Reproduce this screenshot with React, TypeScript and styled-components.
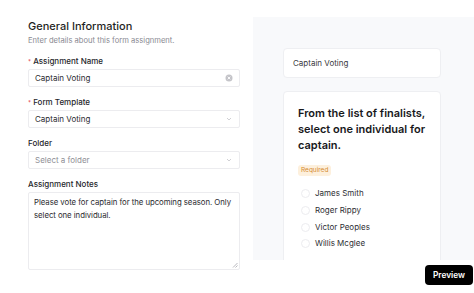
import styled, { createGlobalStyle } from 'styled-components';

const GlobalStyle = createGlobalStyle`
  * { box-sizing: border-box; }
  body {
    margin: 0;
    background: #ffffff;
    font-family: Inter, "Noto Sans", sans-serif;
    color: #1f1f24;
  }
`;

const Page = styled.div`
  display: flex;
  width: 474px;
  height: 293px;
  overflow: hidden;
`;

const FormColumn = styled.div`
  width: 240px;
  padding: 19px 0 0 28px;
  display: flex;
  flex-direction: column;
`;

const Heading = styled.h1`
  margin: 0;
  font-size: 11px;
  line-height: 15px;
  font-weight: 500;
  color: #1f1f24;
`;

const Subheading = styled.p`
  margin: 1px 0 0;
  font-size: 7.6px;
  line-height: 11px;
  color: #8a8a92;
`;

const Field = styled.div`
  margin-top: 10px;
  display: flex;
  flex-direction: column;
`;

const Label = styled.label`
  font-size: 8px;
  line-height: 11px;
  font-weight: 500;
  color: #26262b;
  margin-bottom: 2px;
`;

const Star = styled.span`
  color: #e5484d;
  font-size: 6px;
  vertical-align: top;
  margin-right: 2px;
`;

const Input = styled.div<{ $placeholder?: boolean }>`
  height: 18px;
  border: 1px solid #ececef;
  border-radius: 2px;
  display: flex;
  align-items: center;
  justify-content: space-between;
  padding: 0 6px;
  font-size: 8px;
  color: ${({ $placeholder }) => ($placeholder ? '#8f8f96' : '#2b2b30')};
`;

const TextArea = styled.div`
  position: relative;
  height: 78px;
  border: 1px solid #ececef;
  border-radius: 2px;
  padding: 3px 5px;
  font-size: 7.8px;
  line-height: 13px;
  letter-spacing: -0.05px;
  color: #2b2b30;
`;

const Grip = styled.svg`
  position: absolute;
  right: 1px;
  bottom: 1px;
`;

const PreviewColumn = styled.div`
  flex: 1;
  margin-left: 13px;
  display: flex;
  flex-direction: column;
  padding-top: 17px;
`;

const PreviewPanel = styled.div`
  height: 243px;
  background: #f8f9fb;
  padding: 31px 0 0 30px;
  overflow: hidden;
  display: flex;
  flex-direction: column;
  gap: 13px;
`;

const Card = styled.div`
  flex-shrink: 0;
  width: 158px;
  background: #ffffff;
  border: 1px solid #eeeff2;
  border-radius: 4px;
`;

const TitleCard = styled(Card)`
  height: 30px;
  display: flex;
  align-items: center;
  padding-left: 9px;
  font-size: 8px;
  color: #3a3a40;
`;

const QuestionCard = styled(Card)`
  padding: 13px 14px 20px;
  min-height: 190px;
`;

const Question = styled.h2`
  margin: 0;
  font-size: 11px;
  line-height: 16px;
  font-weight: 600;
  color: #18181b;
`;

const Badge = styled.span`
  display: inline-block;
  margin-top: 12px;
  padding: 1px 3px;
  border-radius: 3px;
  background: #fdf0dd;
  color: #d58a2e;
  font-size: 6.5px;
  line-height: 9px;
`;

const Options = styled.div`
  margin-top: 12px;
  display: flex;
  flex-direction: column;
  gap: 5.8px;
  padding-left: 3px;
`;

const Option = styled.div`
  display: flex;
  align-items: center;
  gap: 5px;
  font-size: 8px;
  line-height: 11px;
  color: #2e2e33;
`;

const Radio = styled.span`
  width: 9px;
  height: 9px;
  border-radius: 50%;
  border: 1px solid #ececef;
`;

const Footer = styled.div`
  display: flex;
  justify-content: flex-end;
  padding: 5px 1px 0 0;
`;

const PreviewButton = styled.button`
  height: 20px;
  padding: 0 8px;
  border: none;
  border-radius: 4px;
  background: #000000;
  color: #ffffff;
  font-family: Inter, "Noto Sans", sans-serif;
  font-size: 8.3px;
  font-weight: 600;
`;

const ClearIcon = () => (
  <svg width="8" height="8" viewBox="0 0 8 8">
    <circle cx="4" cy="4" r="3.5" fill="#c4c4c9" />
    <path d="M2.7 2.7 L5.3 5.3 M5.3 2.7 L2.7 5.3" stroke="#fff" strokeWidth="0.9" />
  </svg>
);

const Chevron = () => (
  <svg width="8" height="8" viewBox="0 0 8 8">
    <path d="M2 3 L4 5 L6 3" fill="none" stroke="#c4c4c9" strokeWidth="0.8" />
  </svg>
);

const candidates = ['James Smith', 'Roger Rippy', 'Victor Peoples', 'Willis Mcglee'];

const App = () => (
  <>
    <GlobalStyle />
    <Page>
      <FormColumn>
        <Heading>General Information</Heading>
        <Subheading>Enter details about this form assignment.</Subheading>
        <Field>
          <Label><Star>*</Star>Assignment Name</Label>
          <Input>Captain Voting<ClearIcon /></Input>
        </Field>
        <Field>
          <Label><Star>*</Star>Form Template</Label>
          <Input>Captain Voting<Chevron /></Input>
        </Field>
        <Field>
          <Label>Folder</Label>
          <Input $placeholder>Select a folder<Chevron /></Input>
        </Field>
        <Field>
          <Label>Assignment Notes</Label>
          <TextArea>
            Please vote for captain for the upcoming season. Only select one individual.
            <Grip width="6" height="6" viewBox="0 0 6 6">
              <path d="M1 5.5 L5.5 1 M3.5 5.5 L5.5 3.5" stroke="#9a9aa0" strokeWidth="0.7" />
            </Grip>
          </TextArea>
        </Field>
      </FormColumn>
      <PreviewColumn>
        <PreviewPanel>
          <TitleCard>Captain Voting</TitleCard>
          <QuestionCard>
            <Question>From the list of finalists, select one individual for captain.</Question>
            <Badge>Required</Badge>
            <Options>
              {candidates.map((name) => (
                <Option key={name}>
                  <Radio />
                  {name}
                </Option>
              ))}
            </Options>
          </QuestionCard>
        </PreviewPanel>
        <Footer>
          <PreviewButton>Preview</PreviewButton>
        </Footer>
      </PreviewColumn>
    </Page>
  </>
);

export default App;
